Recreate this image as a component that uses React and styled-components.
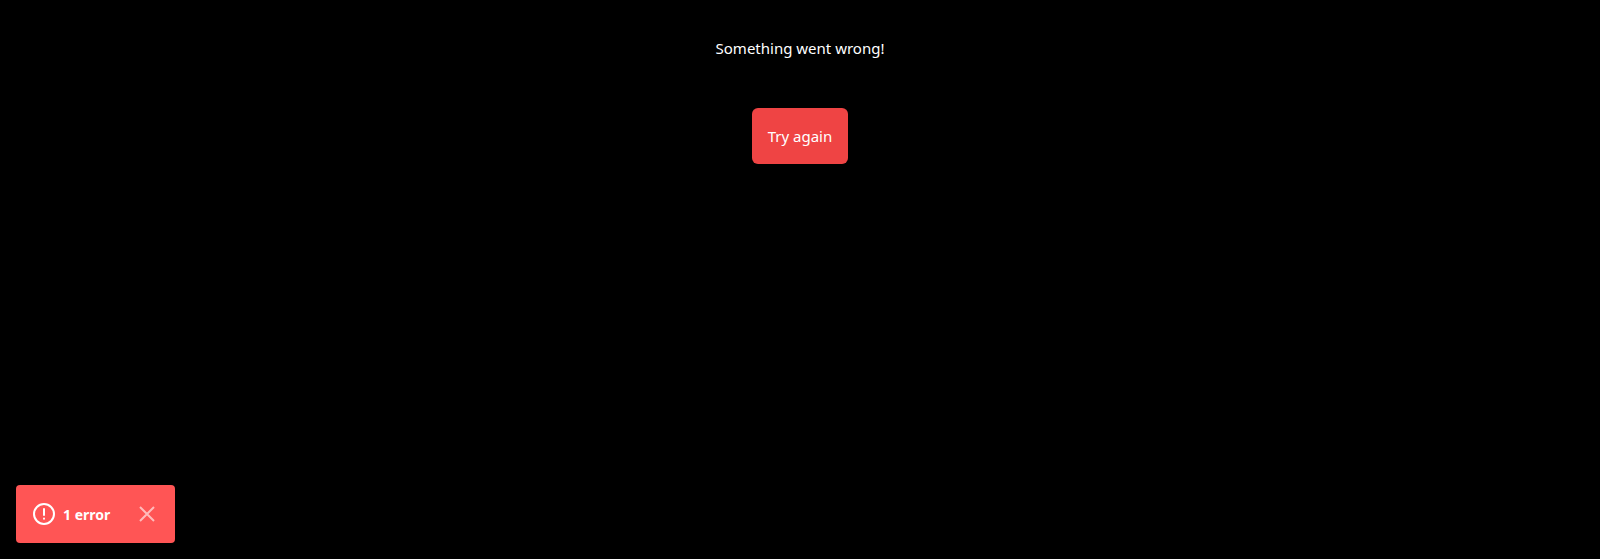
import React from "react";
import styled, { createGlobalStyle } from "styled-components";

const Global = createGlobalStyle`
  html, body { margin: 0; padding: 0; background: #000; height: 100%; }
  #root { height: 100%; }
  body { font-family: "Noto Sans", "Open Sans", sans-serif; }
`;
const Page = styled.main`
  height: 559px;
  overflow: hidden;
  background: #000;
  color: #fff;
  display: flex;
  flex-direction: column;
  align-items: center;
  padding-top: 37px;
  box-sizing: border-box;
`;
const Message = styled.h2`
  margin: 0 0 49px;
  font-size: 15px;
  line-height: 22px;
  font-weight: 400;
`;
const RetryButton = styled.button`
  width: 96px;
  height: 56px;
  border: 0;
  border-radius: 6px;
  background: #ef4444;
  color: #fff;
  font: 400 15px "Noto Sans", sans-serif;
  padding: 0;
`;
const Toast = styled.div`
  position: fixed;
  left: 16px;
  bottom: 16px;
  width: 159px;
  height: 58px;
  box-sizing: border-box;
  padding: 0 17px;
  display: flex;
  align-items: center;
  background: #ff5555;
  border-radius: 4px;
  color: #fff;
`;
const ToastLabel = styled.span`
  margin-left: 8px;
  font-size: 14px;
  font-weight: 700;
  flex: 1;
`;
const CloseIcon = styled.svg`
  display: block;
  margin-right: 3px;
  opacity: 0.6;
`;

export default function App() {
  return (
    <>
      <Global />
      <Page>
        <Message>Something went wrong!</Message>
        <RetryButton>Try again</RetryButton>
      </Page>
      <Toast>
        <svg width="22" height="22" viewBox="0 0 22 22" fill="none" stroke="#fff" strokeWidth="2" strokeLinecap="round">
          <circle cx="11" cy="11" r="10" />
          <path d="M11 6v6" />
          <path d="M11 15.5v.2" />
        </svg>
        <ToastLabel>1 error</ToastLabel>
        <CloseIcon width="16" height="16" viewBox="0 0 16 16" fill="none" stroke="#fff" strokeWidth="2">
          <path d="M1 1l14 14M15 1L1 15" />
        </CloseIcon>
      </Toast>
    </>
  );
}
